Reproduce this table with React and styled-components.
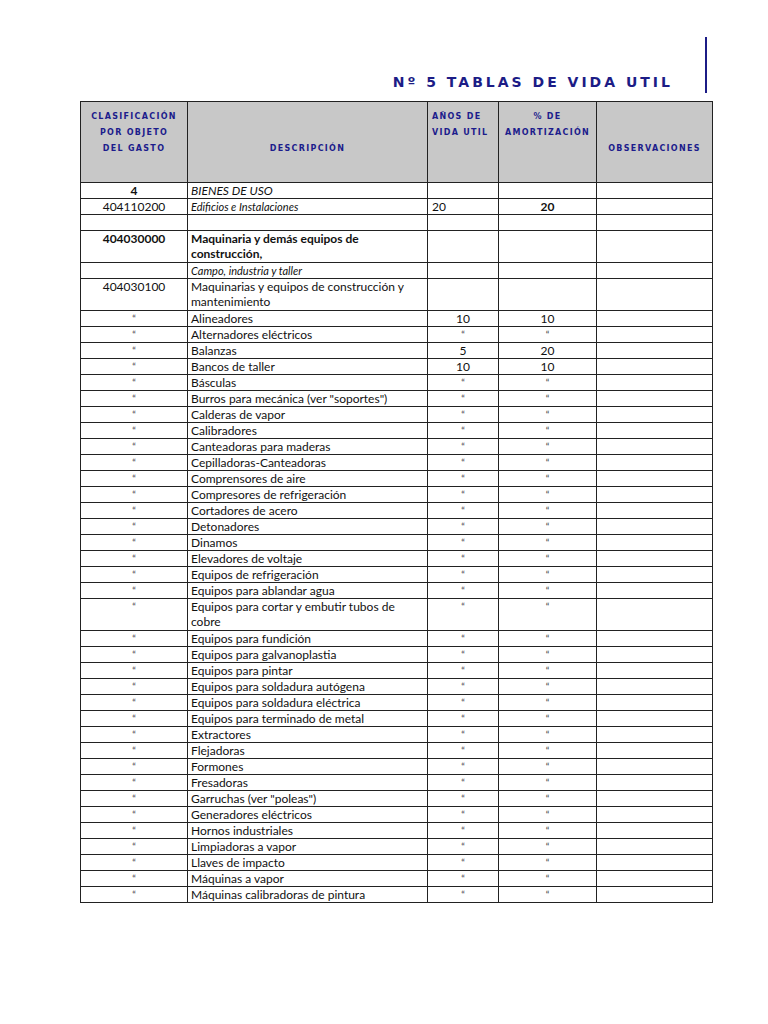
import React from "react";
import styled, { createGlobalStyle } from "styled-components";

const GlobalStyle = createGlobalStyle`
  html, body {
    margin: 0;
    padding: 0;
    background: #ffffff;
  }
  body {
    font-family: Lato, "Liberation Sans", sans-serif;
    color: #111;
  }
`;

const Q = "\u201C";

const items = [
  ["Alineadores", "10", "10"],
  ["Alternadores eléctricos", Q, Q],
  ["Balanzas", "5", "20"],
  ["Bancos de taller", "10", "10"],
  ["Básculas"],
  ['Burros para mecánica (ver "soportes")'],
  ["Calderas de vapor"],
  ["Calibradores"],
  ["Canteadoras para maderas"],
  ["Cepilladoras-Canteadoras"],
  ["Comprensores de aire"],
  ["Compresores de refrigeración"],
  ["Cortadores de acero"],
  ["Detonadores"],
  ["Dinamos"],
  ["Elevadores de voltaje"],
  ["Equipos de refrigeración"],
  ["Equipos para ablandar agua"],
  ["Equipos para cortar y embutir tubos de\ncobre"],
  ["Equipos para fundición"],
  ["Equipos para galvanoplastia"],
  ["Equipos para pintar"],
  ["Equipos para soldadura autógena"],
  ["Equipos para soldadura eléctrica"],
  ["Equipos para terminado de metal"],
  ["Extractores"],
  ["Flejadoras"],
  ["Formones"],
  ["Fresadoras"],
  ['Garruchas (ver "poleas")'],
  ["Generadores eléctricos"],
  ["Hornos industriales"],
  ["Limpiadoras a vapor"],
  ["Llaves de impacto"],
  ["Máquinas a vapor"],
  ["Máquinas calibradoras de pintura"],
].map(([desc, years = Q, pct = Q]) => ({ code: Q, desc, years, pct }));

const rows = [
  { code: "4", codeBold: true, desc: "BIENES DE USO", descStyle: "italic" },
  {
    code: "404110200",
    desc: "Edificios e Instalaciones",
    descStyle: "small",
    years: "20",
    yearsLeft: true,
    pct: "20",
    pctBold: true,
  },
  { spacer: true },
  {
    code: "404030000",
    codeBold: true,
    desc: "Maquinaria y demás equipos de\nconstrucción,",
    descStyle: "bold",
  },
  { desc: "Campo, industria y taller", descStyle: "small" },
  { code: "404030100", desc: "Maquinarias y equipos de construcción y\nmantenimiento" },
  ...items,
];

const Page = styled.div`
  width: 768px;
  min-height: 1024px;
  box-sizing: border-box;
  padding: 37px 56px 0 80px;
`;

const TitleBar = styled.header`
  display: flex;
  justify-content: flex-end;
  align-items: flex-end;
  gap: 32px;
  padding-right: 5px;
  height: 56px;
`;

const Title = styled.h1`
  margin: 0 0 2px 0;
  font-family: "DejaVu Sans", sans-serif;
  font-weight: 700;
  font-size: 14px;
  letter-spacing: 3px;
  color: #1c1c86;
  line-height: 18px;
  white-space: nowrap;
`;

const Rule = styled.div`
  width: 2px;
  height: 56px;
  background: #1c1c86;
`;

const Table = styled.table`
  margin-top: 8px;
  width: 632px;
  border-collapse: collapse;
  table-layout: fixed;
  border: 1px solid #222;
`;

const HeadCell = styled.th`
  background: #c8c8c8;
  border: 1px solid #222;
  height: 81px;
  box-sizing: border-box;
  vertical-align: top;
  padding: ${(p) => p.$top || 7}px ${(p) => (p.$left ? "0 0 4px" : "1px 0 1px")};
  text-align: ${(p) => (p.$left ? "left" : "center")};
  font-family: "DejaVu Sans", sans-serif;
  font-weight: 700;
  font-size: 8px;
  letter-spacing: 1.3px;
  line-height: 16px;
  color: #1c1c8c;
  white-space: pre-line;
`;

const Row = styled.tr`
  height: ${(p) => (p.$spacer ? 15 : p.$tall ? 32 : 16)}px;
`;

const Cell = styled.td`
  border: 1px solid #222;
  padding: 0 ${(p) => (p.$align === "left" ? "0 0 4px" : "2px")};
  text-align: ${(p) => p.$align || "center"};
  font-size: ${(p) => (p.$quote ? 10 : 12)}px;
  font-weight: ${(p) => (p.$bold ? 700 : 400)};
  line-height: 15px;
  height: 15px;
  color: ${(p) => (p.$quote ? "#444" : "#111")};
  vertical-align: top;
  white-space: pre-line;
  overflow: hidden;
`;

const DescCell = styled.td`
  border: 1px solid #222;
  padding: 0 2px 0 3px;
  text-align: left;
  font-size: ${(p) => (p.$variant === "small" ? 11 : 12)}px;
  font-style: ${(p) => (p.$variant === "small" || p.$variant === "italic" ? "italic" : "normal")};
  font-weight: ${(p) => (p.$variant === "bold" ? 700 : 400)};
  line-height: 15px;
  vertical-align: top;
  white-space: pre-line;
`;

const renderValue = (v, bold, align) => (
  <Cell $quote={v === Q} $bold={bold} $align={align}>
    {v || ""}
  </Cell>
);

export default function App() {
  return (
    <>
      <GlobalStyle />
      <Page>
        <TitleBar>
          <Title>Nº 5 TABLAS DE VIDA UTIL</Title>
          <Rule />
        </TitleBar>
        <Table>
          <colgroup>
            <col style={{ width: 107 }} />
            <col style={{ width: 240 }} />
            <col style={{ width: 71 }} />
            <col style={{ width: 98 }} />
            <col style={{ width: 116 }} />
          </colgroup>
          <thead>
            <tr>
              <HeadCell>{"CLASIFICACIÓN\nPOR OBJETO\nDEL GASTO"}</HeadCell>
              <HeadCell $top={39}>DESCRIPCIÓN</HeadCell>
              <HeadCell $left>{"AÑOS DE\nVIDA UTIL"}</HeadCell>
              <HeadCell>{"% DE\nAMORTIZACIÓN"}</HeadCell>
              <HeadCell $top={39}>OBSERVACIONES</HeadCell>
            </tr>
          </thead>
          <tbody>
            {rows.map((r, i) =>
              r.spacer ? (
                <Row key={i} $spacer>
                  <Cell />
                  <Cell />
                  <Cell />
                  <Cell />
                  <Cell />
                </Row>
              ) : (
                <Row key={i} $tall={r.desc.includes("\n")}>
                  {renderValue(r.code, r.codeBold)}
                  <DescCell $variant={r.descStyle}>{r.desc}</DescCell>
                  {renderValue(r.years, false, r.yearsLeft ? "left" : "center")}
                  {renderValue(r.pct, r.pctBold)}
                  <Cell />
                </Row>
              )
            )}
          </tbody>
        </Table>
      </Page>
    </>
  );
}
